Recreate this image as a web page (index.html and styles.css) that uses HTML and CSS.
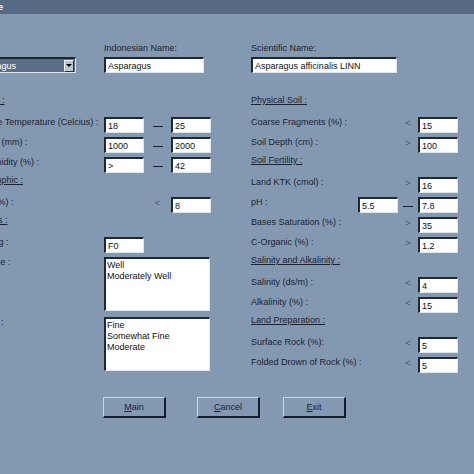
FILE: index.html
```html
<!DOCTYPE html>
<html lang="en">
<head>
  <meta charset="UTF-8" />
  <title>Crop Profile</title>
  <link rel="stylesheet" href="styles.css">
</head>
<body>

<div class="dialog">
  <div class="titlebar">Profile</div>

  <!-- names -->
  <div class="names">
    <div class="combo">
      <span class="combo-text">Asparagus</span>
      <span class="combo-btn"><i></i></span>
    </div>
    <div>
      <label>Indonesian Name:</label>
      <input class="fld wide" type="text" value="Asparagus" readonly />
    </div>
    <div>
      <label>Scientific Name:</label>
      <input class="fld wider" type="text" value="Asparagus afficinalis LINN" readonly />
    </div>
  </div>

  <div class="cols">
    <!-- left column -->
    <div class="col left">
      <div class="row"><span class="hdr">Climate :</span></div>
      <div class="row">
        <span class="lbl">Average Temperature (Celcius) :</span>
        <input class="fld" value="18" readonly /><span class="dash"></span><input class="fld" value="25" readonly />
      </div>
      <div class="row">
        <span class="lbl">Rainfall (mm) :</span>
        <input class="fld" value="1000" readonly /><span class="dash"></span><input class="fld" value="2000" readonly />
      </div>
      <div class="row">
        <span class="lbl">Air Humidity (%) :</span>
        <input class="fld" value="&gt;" readonly /><span class="dash"></span><input class="fld" value="42" readonly />
      </div>
      <div class="row"><span class="hdr">Topographic :</span></div>
      <div class="row">
        <span class="lbl single">Slope (%) :</span>
        <span class="sym">&lt;</span><input class="fld" value="8" readonly />
      </div>
      <div class="row"><span class="hdr">Hazards :</span></div>
      <div class="row">
        <span class="lbl">Flooding :</span>
        <input class="fld" value="F0" readonly />
      </div>
      <div class="row tall">
        <span class="lbl">Drainage :</span>
        <div class="list">
          <div>Well</div>
          <div>Moderately Well</div>
        </div>
      </div>
      <div class="row tall">
        <span class="lbl">Texture :</span>
        <div class="list">
          <div>Fine</div>
          <div>Somewhat Fine</div>
          <div>Moderate</div>
        </div>
      </div>
    </div>

    <!-- right column -->
    <div class="col right">
      <div class="row"><span class="hdr">Physical Soil :</span></div>
      <div class="row">
        <span class="lbl single">Coarse Fragments (%) :</span>
        <span class="sym">&lt;</span><input class="fld" value="15" readonly />
      </div>
      <div class="row">
        <span class="lbl single">Soil Depth (cm) :</span>
        <span class="sym">&gt;</span><input class="fld" value="100" readonly />
      </div>
      <div class="row"><span class="hdr">Soil Fertility :</span></div>
      <div class="row">
        <span class="lbl single">Land KTK (cmol) :</span>
        <span class="sym">&gt;</span><input class="fld" value="16" readonly />
      </div>
      <div class="row">
        <span class="lbl">pH :</span>
        <input class="fld" value="5.5" readonly /><span class="dash"></span><input class="fld" value="7.8" readonly />
      </div>
      <div class="row">
        <span class="lbl single">Bases Saturation (%) :</span>
        <span class="sym">&gt;</span><input class="fld" value="35" readonly />
      </div>
      <div class="row">
        <span class="lbl single">C-Organic (%) :</span>
        <span class="sym">&gt;</span><input class="fld" value="1.2" readonly />
      </div>
      <div class="row"><span class="hdr">Salinity and Alkalinity :</span></div>
      <div class="row">
        <span class="lbl single">Salinity (ds/m) :</span>
        <span class="sym">&lt;</span><input class="fld" value="4" readonly />
      </div>
      <div class="row">
        <span class="lbl single">Alkalinity (%) :</span>
        <span class="sym">&lt;</span><input class="fld" value="15" readonly />
      </div>
      <div class="row"><span class="hdr">Land Preparation :</span></div>
      <div class="row">
        <span class="lbl single">Surface Rock (%):</span>
        <span class="sym">&lt;</span><input class="fld" value="5" readonly />
      </div>
      <div class="row">
        <span class="lbl single">Folded Drown of Rock (%) :</span>
        <span class="sym">&lt;</span><input class="fld" value="5" readonly />
      </div>
    </div>
  </div>

  <div class="buttons">
    <button><u>M</u>ain</button>
    <button class="cancel"><u>C</u>ancel</button>
    <button class="exit"><u>E</u>xit</button>
  </div>
</div>

</body>
</html>
```

FILE: styles.css
```css
body {
  margin: 0;
  background-color: #8399b2;
  font-family: 'Liberation Sans', Arial, sans-serif;
  font-size: 9px;
  color: #1b2230;
  overflow: hidden;
}

.dialog {
  margin-left: -31px;
  width: 505px;
}

.titlebar {
  height: 14px;
  line-height: 14px;
  padding-left: 6px;
  background-color: #576a84;
  color: #fff;
  font-weight: bold;
}

/* names */
.names {
  display: grid;
  grid-template-columns: 135px 147px 1fr;
  align-items: end;
  padding-top: 29px;
}

.names label {
  display: block;
  line-height: 11px;
  margin-bottom: 3px;
}

.combo {
  display: flex;
  align-items: center;
  box-sizing: border-box;
  width: 107px;
  height: 16px;
  background-color: #5a6e88;
  color: #fff;
  border-style: solid;
  border-width: 2px 1px 1px 2px;
  border-color: #1f2733 #dfe6ee #dfe6ee #1f2733;
}

.combo-text {
  flex: 1;
  padding-left: 2px;
}

.combo-btn {
  display: flex;
  align-items: center;
  justify-content: center;
  box-sizing: border-box;
  width: 10px;
  height: 12px;
  margin-right: 1px;
  background-color: #bcc7d3;
  border-style: solid;
  border-width: 1px;
  border-color: #eef2f6 #2a3340 #2a3340 #eef2f6;
}

.combo-btn i {
  width: 0;
  height: 0;
  border-left: 3px solid transparent;
  border-right: 3px solid transparent;
  border-top: 3px solid #000;
}

.fld {
  box-sizing: border-box;
  width: 40px;
  height: 16px;
  margin: 2px 0 0 0;
  padding: 0 2px;
  background: #fff;
  color: #111;
  font: inherit;
  border-style: solid;
  border-width: 2px 1px 1px 2px;
  border-color: #1f2733 #dfe6ee #dfe6ee #1f2733;
  outline: none;
}

.names .fld {
  margin: 0;
}

.fld.wide {
  width: 100px;
}

.fld.wider {
  width: 146px;
}

/* columns */
.cols {
  display: grid;
  grid-template-columns: 282px 207px;
  margin-top: 22px;
}

.row {
  display: grid;
  align-items: start;
  height: 20px;
}

.left .row {
  grid-template-columns: 135px 40px 27px 40px;
}

.right .row {
  grid-template-columns: 107px 40px 20px 40px;
}

.row.tall {
  height: 60px;
}

.lbl {
  padding-top: 2px;
  line-height: 11px;
  white-space: nowrap;
}

.lbl.single {
  grid-column: 1 / 3;
}

.hdr {
  grid-column: 1 / 5;
  line-height: 11px;
  text-decoration: underline;
  white-space: nowrap;
}

.sym {
  grid-column: 3;
  padding-top: 3px;
  line-height: 11px;
  text-align: center;
  color: #4a5667;
}

.dash {
  justify-self: center;
  width: 10px;
  height: 1px;
  margin-top: 11px;
  background-color: #1b2230;
}

.list {
  grid-column: 2 / 5;
  box-sizing: border-box;
  width: 106px;
  height: 54px;
  margin-top: 2px;
  padding: 1px;
  background: #fff;
  color: #111;
  line-height: 11px;
  border-style: solid;
  border-width: 2px 1px 1px 2px;
  border-color: #1f2733 #dfe6ee #dfe6ee #1f2733;
}

/* buttons */
.buttons {
  display: flex;
  padding-left: 134px;
  margin-top: 22px;
}

button {
  box-sizing: border-box;
  width: 63px;
  height: 21px;
  padding: 0;
  background-color: #8399b2;
  color: #1b2230;
  font: inherit;
  border-style: solid;
  border-width: 1px 2px 2px 1px;
  border-color: #c9d6e4 #141c28 #141c28 #c9d6e4;
}

button.cancel {
  margin-left: 31px;
}

button.exit {
  margin-left: 23px;
}
```
